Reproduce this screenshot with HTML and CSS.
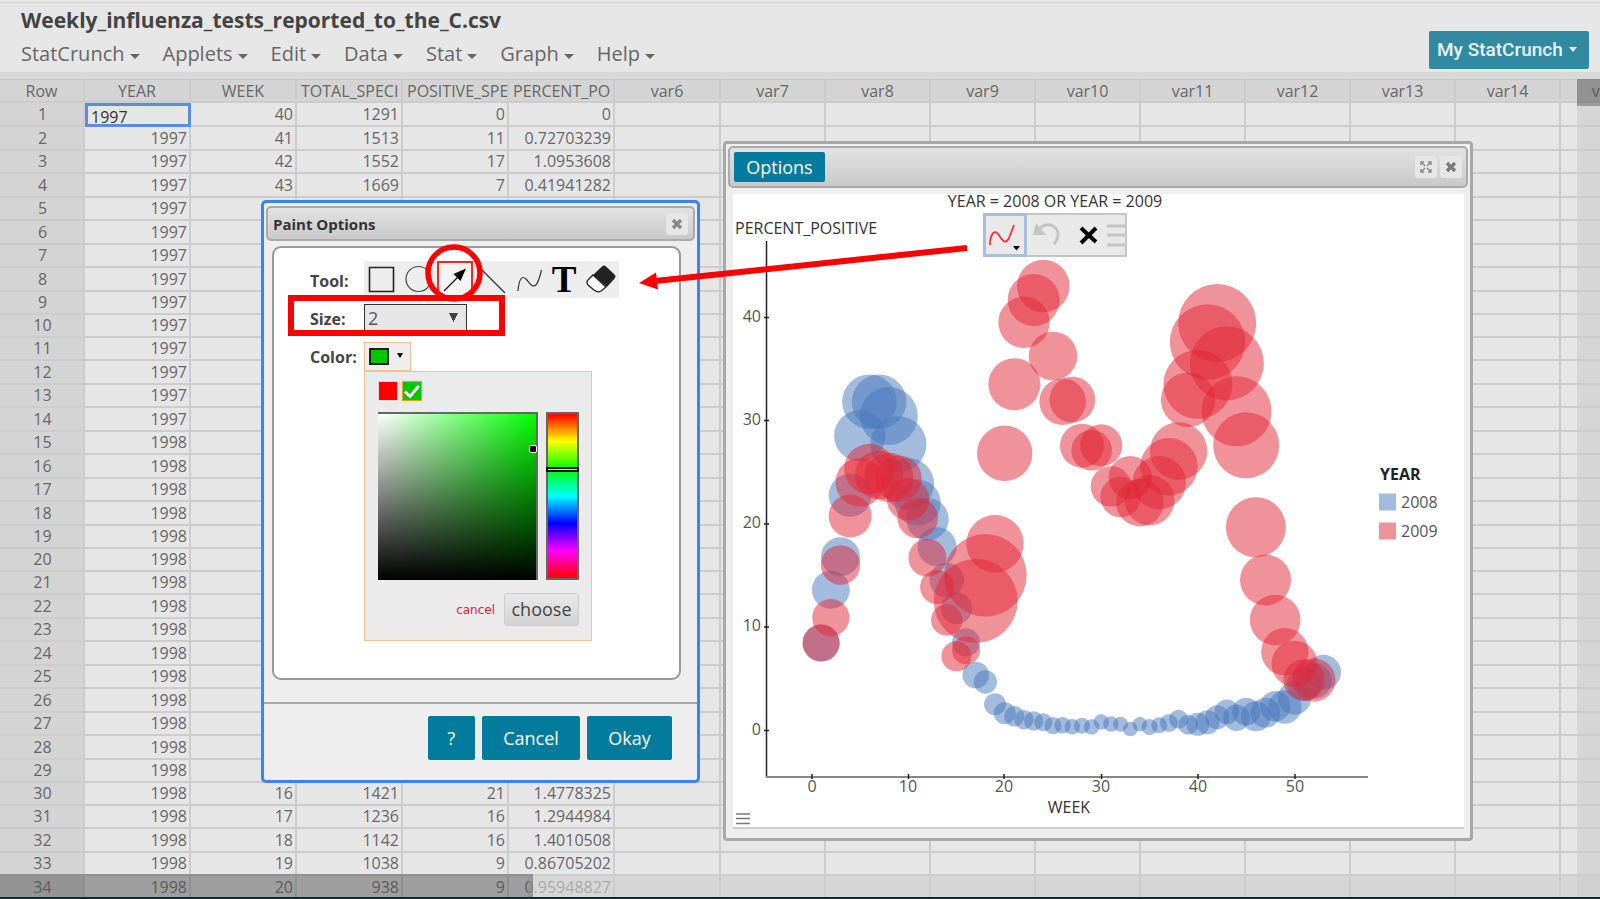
FILE: index.html
```html
<!DOCTYPE html>
<html lang="en">
<head>
<meta charset="utf-8">
<title>StatCrunch</title>
<link rel="stylesheet" href="styles.css">
</head>
<body>
<header class="topbar">
  <div class="topbar-left">
    <h1 class="file-title">Weekly_influenza_tests_reported_to_the_C.csv</h1>
    <nav class="menu">
      <button class="menu-item">StatCrunch</button>
      <button class="menu-item">Applets</button>
      <button class="menu-item">Edit</button>
      <button class="menu-item">Data</button>
      <button class="menu-item">Stat</button>
      <button class="menu-item">Graph</button>
      <button class="menu-item">Help</button>
    </nav>
  </div>
  <button class="account">My StatCrunch</button>
</header>
<main class="sheet">
  <table class="grid">
    <colgroup><col class="col-row"><col class="col-data" span="6"><col class="col-var" span="9"></colgroup>
    <thead><tr id="head"></tr></thead>
    <tbody id="rows"></tbody>
  </table>
  <div class="vtrack"><div class="vthumb"></div></div>
  <div class="htrack"><div class="hthumb"></div></div>
</main>

<section class="window graph" aria-label="Graph">
  <div class="graph-bar">
    <button class="btn btn-options">Options</button>
    <div class="win-tools">
      <button class="win-btn" aria-label="Expand"><svg width="12" height="12" viewBox="0 0 12 12"><path d="M1 4V1h3M8 1h3v3M11 8v3H8M4 11H1V8M2 2l3 3M10 2 7 5M10 10 7 7M2 10l3-3" fill="none" stroke="#888" stroke-width="1.4"/></svg></button>
      <button class="win-btn" aria-label="Close"><svg width="12" height="12" viewBox="0 0 12 12"><path d="M2 2l8 8M10 2l-8 8" stroke="#7b7b7b" stroke-width="3.4"/></svg></button>
    </div>
  </div>
  <div class="plot">
    <svg id="chart" class="chart" viewBox="733 194 731 633">
      <g id="bubbles"></g>
      <path d="M766.500 241V777" stroke="#222" stroke-width="1.500"/>
      <path d="M766 777H1368" stroke="#888" stroke-width="2"/>
      <path d="M764 317.500h5M764 420.500h5M764 524h5M764 627h5M764 730.500h5M812 774v5M908.500 774v5M1004 774v5M1101.500 774v5M1198 774v5M1295 774v5" stroke="#222" stroke-width="1.500"/>
      <text x="1055" y="207" text-anchor="middle" class="t">YEAR = 2008 OR YEAR = 2009</text>
      <text x="735" y="234" class="t">PERCENT_POSITIVE</text>
      <g class="t axis" text-anchor="end"><text x="761" y="322">40</text><text x="761" y="425">30</text><text x="761" y="528">20</text><text x="761" y="631">10</text><text x="761" y="735">0</text></g>
      <g class="t axis" text-anchor="middle"><text x="812" y="792">0</text><text x="908" y="792">10</text><text x="1004" y="792">20</text><text x="1101" y="792">30</text><text x="1198" y="792">40</text><text x="1295" y="792">50</text></g>
      <text x="1069" y="813" text-anchor="middle" class="t">WEEK</text>
      <text x="1380" y="480" class="t b">YEAR</text>
      <path d="M1379 493.500h17v17h-17z" fill="#a3bbdd"/><path d="M1379 522.500h17v17h-17z" fill="#f0929a"/>
      <text x="1401" y="508" class="t axis">2008</text><text x="1401" y="537" class="t axis">2009</text>
      <path d="M736 814h14M736 818.500h14M736 823.500h14" stroke="#777" stroke-width="1.500"/>
    </svg>
    <div class="draw-tools">
      <button class="draw-btn active" aria-label="Draw"><svg width="36" height="36" viewBox="0 0 36 36"><path d="M3 28C3 18 7 12 11 17S18 29 22 21L27 8" fill="none" stroke="#f03038" stroke-width="1.800"/><path d="M26 29h7l-3.500 4.500z"/></svg></button>
      <button class="draw-btn" aria-label="Undo"><svg width="36" height="36" viewBox="0 0 36 36"><path d="M11 12C20 3 31 10 30 19Q29 24 26 27" fill="none" stroke="#c4c4c4" stroke-width="3"/><path d="M8 6 5 18l13 0z" fill="#c4c4c4"/></svg></button>
      <button class="draw-btn" aria-label="Delete"><svg width="36" height="36" viewBox="0 0 36 36"><path d="M13 11l15 14M28 11 13 26" stroke="#000" stroke-width="4"/></svg></button>
      <svg class="grip" width="18" height="40" viewBox="0 0 18 40"><path d="M0 11h18M0 20h18M0 30h18" stroke="#c4c4c4" stroke-width="3"/></svg>
    </div>
  </div>
</section>

<section class="window paint" aria-label="Paint Options">
  <div class="paint-bar"><h2 class="paint-title">Paint Options</h2>
    <button class="win-btn" aria-label="Close"><svg width="12" height="12" viewBox="0 0 12 12"><path d="M2 2l8 8M10 2l-8 8" stroke="#888" stroke-width="3.400"/></svg></button></div>
  <div class="panel">
    <div class="field"><span class="label">Tool:</span>
      <div class="tools">
        <button class="tool" aria-label="Rectangle"><svg width="36" height="36" viewBox="0 0 36 36"><path d="M5.500 5.500h24v24h-24z" fill="none" stroke="#222" stroke-width="1.600"/></svg></button>
        <button class="tool" aria-label="Circle"><svg width="37" height="36" viewBox="0 0 37 36"><circle cx="18.500" cy="17" r="12.500" fill="none" stroke="#444" stroke-width="1.200"/></svg></button>
        <button class="tool picked" aria-label="Arrow"><svg width="36" height="36" viewBox="0 0 36 36"><path d="M7 29 22 14" stroke="#111" stroke-width="1.300"/><path d="M29 6.500 16.500 12l7 7z"/></svg></button>
        <button class="tool" aria-label="Line"><svg width="36" height="36" viewBox="0 0 36 36"><path d="M6 5l26 26" stroke="#333" stroke-width="1.300"/></svg></button>
        <button class="tool" aria-label="Curve"><svg width="36" height="36" viewBox="0 0 36 36"><path d="M9 29C10 17 13 13 17 17S23 26 27 23Q30 19 32.500 8" fill="none" stroke="#333" stroke-width="1.200"/></svg></button>
        <button class="tool tool-text" aria-label="Text">T</button>
        <button class="tool" aria-label="Eraser"><svg width="36" height="36" viewBox="2 0 36 36"><path d="M21 4.500Q23 2.500 25 4.500L34 13Q35 14.500 34 16L26 25 12 13z" fill="#222"/><path d="M12 13 25 25 20 29Q17 31 13 28L7 23Q5 20 7 18z" fill="#fff" stroke="#222" stroke-width="1.300"/></svg></button>
      </div>
    </div>
    <div class="field"><label class="label" for="size">Size:</label>
      <select id="size" class="size"><option>2</option></select></div>
    <div class="field"><span class="label">Color:</span>
      <div class="color-wrap">
        <button class="color-btn" aria-label="Color"><span class="chip"></span><span class="chip-arrow"></span></button>
        <div class="picker">
          <div class="swatches"><button class="swatch red" aria-label="Red"></button><button class="swatch green" aria-label="Green"><svg width="18" height="18" viewBox="0 0 18 18"><path d="M2 9.500 7 14.500 16 3.500" fill="none" stroke="#fff" stroke-width="3"/></svg></button></div>
          <div class="fields"><div class="shade"><span class="dot"></span></div><div class="hue"><span class="hue-mark"></span></div></div>
          <div class="picker-foot"><a class="picker-cancel" href="#">cancel</a><button class="choose">choose</button></div>
        </div>
      </div>
    </div>
  </div>
  <div class="paint-foot"><button class="btn btn-help">?</button><button class="btn btn-cancel">Cancel</button><button class="btn btn-okay">Okay</button></div>
</section>

<svg class="notes" width="700" height="120" viewBox="280 235 700 120">
  <ellipse cx="454" cy="273" rx="26" ry="26" fill="none" stroke="#f00" stroke-width="5.500"/>
  <path d="M291 298h211v35H291z" fill="none" stroke="#f00" stroke-width="6"/>
  <path d="M967 248 655 281" stroke="#f00" stroke-width="6"/>
  <path d="M639 283 656 272.500 658 289.500z" fill="#f00"/>
</svg>
<script src="app.js"></script>
</body>
</html>
```
FILE: styles.css
```css
* { box-sizing: border-box; }
body { margin: 0; height: 100vh; display: flex; flex-direction: column; overflow: hidden; background: #e6e6e6; color: #666; font-family: "Open Sans", "Noto Sans", sans-serif; font-size: 16px; }
button { font-family: inherit; padding: 0; border: 0; background: none; color: inherit; }
svg { display: block; }
.topbar { flex: none; display: flex; justify-content: space-between; align-items: flex-start; height: 79px; padding: 4px 11px 0 21px; border-bottom: 7px solid #d8d8d8; box-shadow: inset 0 2px #e6e6e6, inset 0 3px #d2d2d2; }
.file-title { margin: 0; font-size: 21px; line-height: 32px; font-weight: 700; color: #444; }
.menu { display: flex; gap: 23px; line-height: 36px; }
.menu-item { display: flex; align-items: center; gap: 5px; font-size: 20px; line-height: 36px; }
.menu-item::after { content: ""; margin-top: 4px; border: 5px solid transparent; border-top-color: #666; border-bottom: 0; }
.account { display: flex; align-items: center; justify-content: space-between; width: 160px; height: 38px; margin-top: 27px; padding: 0 12px 2px 8px; border-radius: 2px; background: #3289a2; color: #e8f3f6; font-family: Roboto, sans-serif; font-size: 19px; font-weight: 500; }
.account::after { content: ""; border: 4px solid transparent; border-top: 5px solid #e6f0f3; border-bottom: 0; }

.sheet { position: relative; flex: 1; min-height: 0; overflow: hidden; border-bottom: 2px solid #10292e; }
.grid { table-layout: fixed; width: 1666px; border-collapse: separate; border-spacing: 0; line-height: 20px; }
.col-row { width: 85px; }
.col-data { width: 106px; }
.col-var { width: 105px; }
.grid th, .grid td { height: 23px; padding: 0 2px 1px 4px; border-right: 2px solid #ccc; border-bottom: 2px solid #ccc; font-weight: 400; text-align: right; overflow: hidden; white-space: nowrap; }
.grid thead th { height: 24px; padding: 0 4px; background: #d4d4d4; border-top: 1px solid #c6c6c6; text-align: center; }
.grid thead .long { text-align: left; }
.grid tbody th { background: #d4d4d4; text-align: center; }
.grid tbody tr:nth-child(even) td, .grid tbody tr:nth-child(even) th { height: 24px; }
.grid tbody tr:nth-child(10n) td, .grid tbody tr:nth-child(10n) th { height: 23px; }
.grid tbody .edit { padding: 0; border: 0; }
.cell-input { display: block; width: 106px; height: 24px; padding: 4px 3px 0; border: 3px solid #5a8ce0; background: #e6e6e6; font: inherit; color: #333; }
.vtrack { position: absolute; top: 0; right: 0; bottom: 0; width: 23px; background: linear-gradient(transparent 27px, rgba(205,205,205,.65) 27px); }
.vthumb { height: 27px; background: rgba(80,80,80,.5); }
.htrack { position: absolute; left: 0; right: 0; bottom: 0; height: 23px; background: linear-gradient(to right, transparent 33%, rgba(205,205,205,.65) 33%); }
.hthumb { width: 33.3%; height: 23px; background: rgba(80,80,80,.48); }

.window { position: absolute; background: #eee; }
.graph { left: 723px; top: 141px; width: 750px; padding: 2px 2px 9px; border: 3px solid #a8a8a8; border-radius: 4px; }
.graph-bar, .paint-bar { display: flex; align-items: center; justify-content: space-between; border: 2px solid #aaa; border-radius: 5px; background: linear-gradient(#e2e2e2, #c9c9c9); }
.graph-bar { height: 42px; padding: 0 4px 0 4px; }
.btn { background: #037b9c; color: #fff; border-radius: 2px; font-size: 18px; }
.btn-options { width: 91px; height: 30px; }
.win-tools { display: flex; gap: 3px; }
.win-btn { display: grid; place-items: center; width: 22px; height: 22px; border-radius: 3px; background: #e6e6e6; }
.plot { position: relative; margin: 6px 4px 0 5px; background: #fff; border-bottom: 2px solid #ccc; }
.chart { width: 100%; height: auto; overflow: visible; }
.t { font-size: 16px; fill: #333; }
.axis { fill: #555; }
.b { font-weight: 700; fill: #222; }
.draw-tools { position: absolute; left: 250px; top: 19px; display: flex; width: 144px; height: 44px; border: 2px solid #c6c6c6; background: #e9e9e9; }
.draw-btn { width: 42px; height: 40px; padding: 1px; }
.draw-btn.active { margin: -2px 0 -2px -2px; width: 44px; height: 44px; border: 3px solid #a9bddc; }
.grip { margin-left: auto; flex: none; }

.paint { left: 261px; top: 200px; width: 439px; padding: 3px 2px 20px; border: 3px solid #3d82f4; border-radius: 5px; }
.paint-bar { height: 35px; padding: 0 5px; }
.paint-title { margin: 0; font-size: 15px; font-weight: 700; color: #333; }
.panel { height: 434px; margin: 5px 14px 0 6px; padding: 13px 0 0 36px; border: 2px solid #999; border-radius: 9px; background: #fff; }
.field { display: flex; height: 38px; }
.label { width: 54px; line-height: 40px; font-weight: 700; color: #444; font-size: 16px; white-space: nowrap; }
.tools { display: flex; height: 37px; background: #ededed; }
.tool { height: 37px; }
.picked { outline: 2px solid #f22; outline-offset: -2px; background: #f5f5f5; }
.tool-text { width: 38px; font: bold 37px/34px "Liberation Serif", serif; color: #000; }
.size { appearance: none; width: 103px; height: 28px; margin-top: 5px; padding: 0 3px; border: 1px solid #333; border-radius: 0; font: 18px "Open Sans", sans-serif; color: #555; background: conic-gradient(from -27deg at 50% 100%, #444 54deg, transparent 54deg) 84px 8px / 9px 9px no-repeat, #e6e6e6; }
.color-wrap { position: relative; margin-top: 5px; }
.color-btn { display: flex; align-items: center; width: 47px; height: 29px; padding: 0 4px; border: 1px solid #f2c296; background: #eee; gap: 8px; }
.chip { width: 20px; height: 17px; border: 2px solid #222; background: #00c800; }
.chip-arrow { margin-top: -2px; border: 3px solid transparent; border-top: 5px solid #000; border-bottom: 0; }
.picker { position: absolute; left: 0; top: 29px; width: 228px; padding: 9px 12px 14px 13px; border: 1px solid #f2c296; background: #ebebeb; }
.swatches { display: flex; gap: 4px; }
.swatch { width: 20px; height: 20px; border: 1px solid #ddd; }
.red { background: #f00; }
.green { background: #00c800; border: 1px solid #f5a000; }
.fields { display: flex; gap: 8px; margin-top: 11px; }
.shade, .hue { position: relative; height: 168px; border: 2px solid #666; }
.shade { width: 161px; border-left: 0; border-bottom: 0; background: linear-gradient(transparent, #000), linear-gradient(to right, #fff, #0f0); }
.hue { width: 33px; background: linear-gradient(#f00, #ff0, #0f0, #0ff, #00f, #f0f, #f00); }
.dot { position: absolute; right: -1px; top: 31px; width: 8px; height: 8px; border: 1px solid #fff; border-radius: 2px; background: #000; }
.hue-mark { position: absolute; left: -2px; right: -2px; top: 53px; height: 5px; border: 2px solid #111; background: #afa; }
.picker-foot { display: flex; align-items: center; justify-content: flex-end; gap: 9px; margin-top: 13px; }
.picker-cancel { color: #d23; font: 12px "DejaVu Sans", sans-serif; text-decoration: none; }
.choose { width: 75px; height: 33px; padding-bottom: 2px; border: 1px solid #ccc; border-radius: 3px; background: linear-gradient(#e9e9e9, #d2d2d2); color: #444; font-size: 18px; }
.paint-foot { display: flex; justify-content: flex-end; gap: 7px; margin: 22px -2px 0; padding: 12px 25px 0; border-top: 2px solid #aaa; }
.paint-foot .btn { height: 44px; }
.btn-help { width: 47px; }
.btn-cancel { width: 98px; }
.btn-okay { width: 85px; }
.notes { position: absolute; left: 280px; top: 235px; pointer-events: none; }
```
FILE: app.js
```js
const heads = ["Row", "YEAR", "WEEK", "TOTAL_SPECI", "POSITIVE_SPE", "PERCENT_PO"];
for (let i = 6; i <= 15; i++) heads.push("var" + i);
document.getElementById("head").innerHTML = heads.map((h) => `<th${h.length > 8 ? ' class="long"' : ""}>${h}</th>`).join("");

const data = {
  1: [40, 1291, 0, "0"], 2: [41, 1513, 11, "0.72703239"], 3: [42, 1552, 17, "1.0953608"], 4: [43, 1669, 7, "0.41941282"],
  30: [16, 1421, 21, "1.4778325"], 31: [17, 1236, 16, "1.2944984"], 32: [18, 1142, 16, "1.4010508"], 33: [19, 1038, 9, "0.86705202"], 34: [20, 938, 9, "0.95948827"]
};
let html = "";
for (let r = 1; r <= 34; r++) {
  const year = r < 15 ? 1997 : 1998;
  html += `<tr><th>${r}</th>`;
  html += r === 1 ? '<td class="edit"><input class="cell-input" aria-label="YEAR row 1" value="1997"></td>' : `<td>${year}</td>`;
  const cells = data[r] || ["", "", "", ""];
  html += cells.map((c) => `<td>${c}</td>`).join("") + "<td></td>".repeat(10) + "</tr>";
}
document.getElementById("rows").innerHTML = html;

// One [y, radius] pair per week, starting at week 1
const y2008 = [[643,18.5],[589.7,19],[556.7,19.5],[495.3,21.5],[435.7,25.7],[401.7,27.3],[401.7,27.3],[416,29],[444.3,28],[484,26],[502.7,23],[519.3,21.3],[546.7,19.5],[580,17.3],[608.3,15.7],[642.3,14],[675,13.3],[682,11.7],[704.3,11],[713.3,11],[716.3,10.3],[719.7,9.7],[721,9.7],[722.3,9],[725.7,8.6],[725.3,8.3],[726.7,7.7],[725.7,8],[727,7.7],[722,7.7],[724,7.7],[724.3,7.5],[729,7.3],[724.3,7.3],[727,8],[725.3,8],[723,9],[719.3,9.5],[724.7,10],[724.3,11.5],[722.3,12],[717.3,12],[711.7,12.3],[717.7,13.3],[711.7,14],[716.3,15],[712.7,15],[706.3,15.3],[707,16.7],[698,16.7],[684,17],[680.7,18],[672.3,17.5]];
const y2009 = [[643,18.6],[617.7,18.6],[565,19.7],[516,21.5],[482.3,24.3],[469,25.3],[475,24.3],[477.3,24.6],[478.7,23.3],[499.3,21.3],[518,20.3],[557.7,19],[587,17],[620,15.7],[656.3,15],[650.3,14],[601,42],[575.3,41.3],[543.7,28.7],[453.3,27.7],[384.3,26],[322.3,25.7],[300,26],[286,26.3],[356,24.3],[401.7,23.3],[399.7,22.9],[445.7,22],[450.3,20.3],[445.3,21],[486.3,20.3],[497,20.3],[477.7,21.7],[502.7,23.7],[500.3,25],[482.7,26.7],[466.7,28.7],[451,28.7],[399.7,27.3],[384.3,34.5],[342,37.7],[323,39],[363.3,37],[411.3,35],[445.3,33],[527.3,30],[580,25.5],[620,25.3],[651.7,23.7],[663.7,23],[680,20.7],[680,21.7]];
const series = (list, fill) => list.map(([y, r], i) => `<circle cx="${811.5 + 9.66 * (i + 1)}" cy="${y}" r="${r}" fill="${fill}" fill-opacity=".5"/>`).join("");
document.getElementById("bubbles").innerHTML = series(y2008, "#4777bb") + series(y2009, "#e12535");
```
